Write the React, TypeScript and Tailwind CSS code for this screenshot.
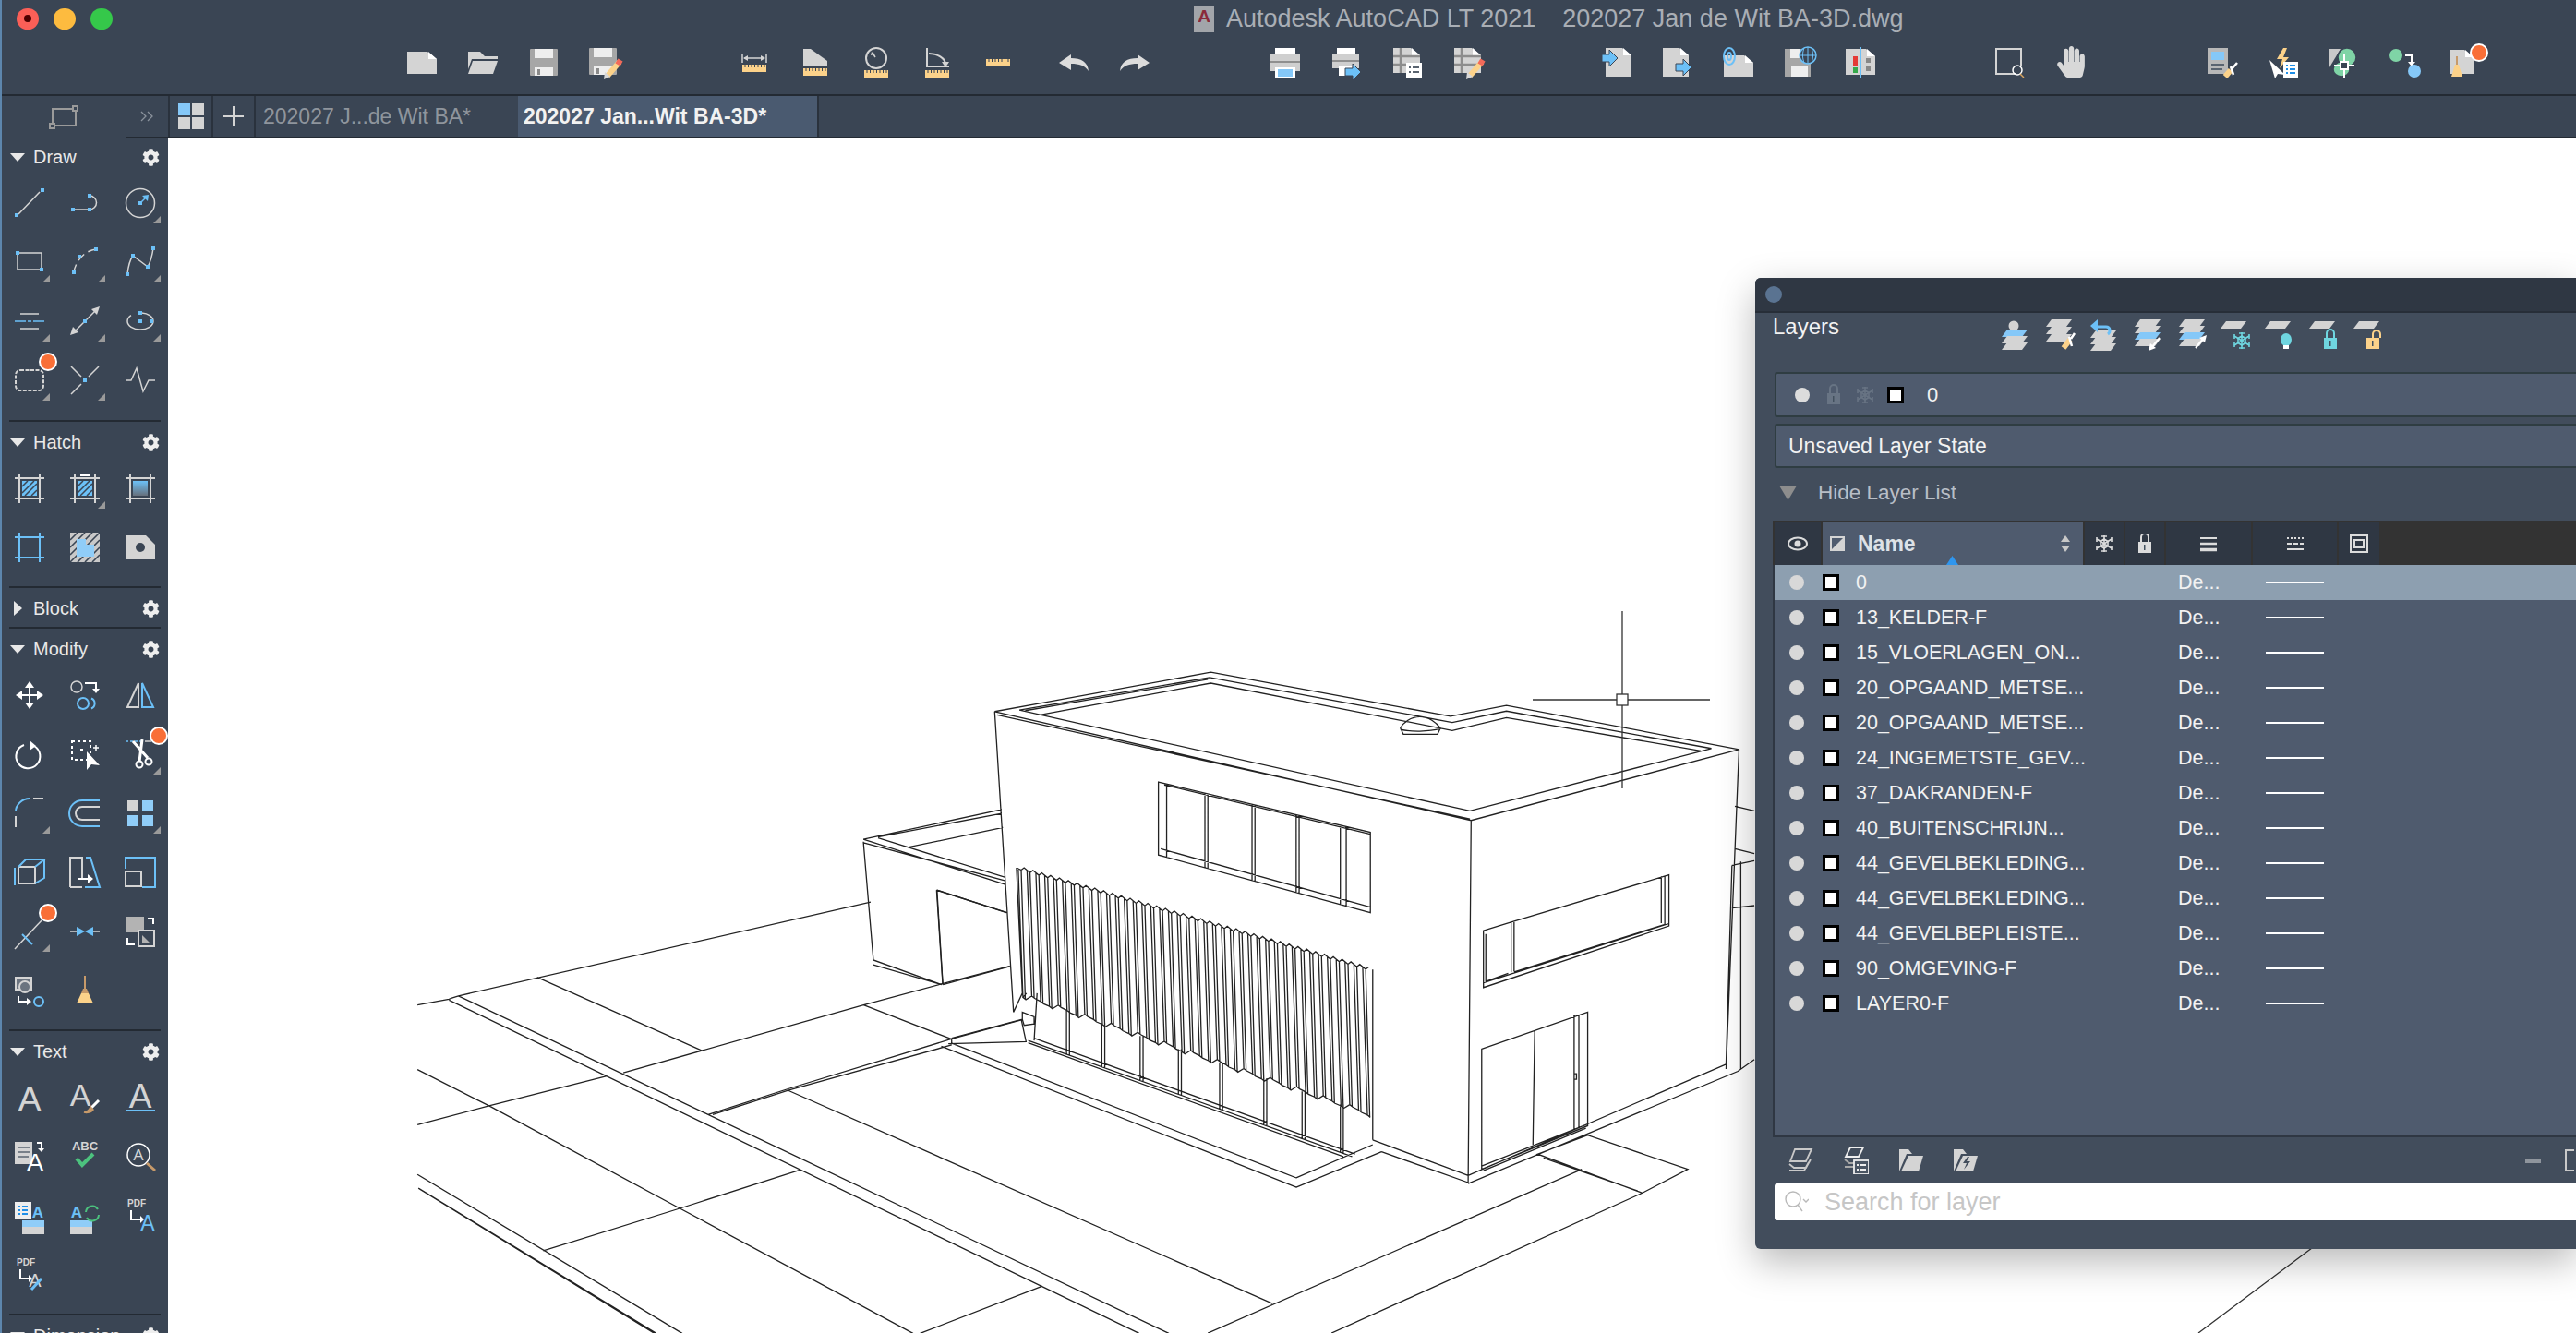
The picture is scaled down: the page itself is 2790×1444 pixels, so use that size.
import React from 'react';
import { FaCog, FaHandPaper } from 'react-icons/fa';

const G = '#d4d4d4';
const B = '#6cc0f7';
const W = '#ffffff';
const A = '#fcd28a';
const O = '#f96f37';
const FONT = '"Liberation Sans", Arial, sans-serif';

const Sq = ({ x, y }: { x: number; y: number }) => <rect x={x - 2} y={y - 2} width={4} height={4} fill={B} stroke="none" />;

const Badge = ({ x = 20, y = -20 }: { x?: number; y?: number }) => (
  <circle cx={x} cy={y} r={9} fill={O} stroke={W} strokeWidth={2} />
);

// sidebar tool icon, coordinates are px from the centre
const T = ({ fly, badge, children }: { fly?: boolean; badge?: boolean; children?: React.ReactNode }) => (
  <div className="flex items-center justify-center">
    <svg viewBox="-24 -24 48 48" className="h-12 w-12 overflow-visible" fill="none" stroke={G} strokeWidth={1.5}>
      {children}
      {fly && <polygon points="22,14 22,22 14,22" fill="#9a9a9a" stroke="none" />}
      {badge && <Badge />}
    </svg>
  </div>
);

const Frame = ({ c = G }: { c?: string }) => (
  <path d="M-11 -16V16M11 -16V16M-16 -11H16M-16 11H16" stroke={c} strokeWidth={2} />
);

const HatchFill = () => (
  <g>
    <rect x={-8} y={-8} width={16} height={16} fill="#6cc0f7" stroke="none" />
    <path d="M-8 -2L-2 -8M-8 5L5 -8M-5 8L8 -5M2 8L8 2" stroke="#3a4554" strokeWidth={1.5} />
  </g>
);

const Letter = ({ x = 0, y = 14, s = 37, c = G, w = 400, children }: { x?: number; y?: number; s?: number; c?: string; w?: number; children: React.ReactNode }) => (
  <text x={x} y={y} fontSize={s} fill={c} stroke="none" fontWeight={w} fontFamily={FONT} textAnchor="middle">{children}</text>
);

const Gear = () => <FaCog className="text-[19px] text-[#eeeeee]" />;

const Section = ({ title, first, open = true, children }: { title: string; first?: boolean; open?: boolean; children?: React.ReactNode }) => (
  <div className={first ? 'mt-[2px]' : 'mt-1'}>
    <div className="flex h-9 items-center pl-[9px] pr-[9px]">
      <svg viewBox="0 0 16 16" className="h-4 w-4">
        {open ? <polygon points="0,4 16,4 8,13" fill="#e8e8e8" /> : <polygon points="4,0 13,8 4,16" fill="#e8e8e8" />}
      </svg>
      <span className="ml-[9px] text-[20px] leading-none text-[#e8e8e8]">{title}</span>
      <span className="ml-auto"><Gear /></span>
    </div>
    {children && <div className="grid grid-cols-[60px_60px_60px] auto-rows-[64px]">{children}</div>}
  </div>
);

const Div = ({ pb = 'mt-[10px]' }: { pb?: string }) => <div className={`${pb} ml-2 mr-2 h-[2px] bg-[#232a33]`} />;

const Sidebar = () => (
  <div className="w-[180px] shrink-0 overflow-hidden bg-[#3a4554]">
    <div className="flex h-[46px] items-start">
      <svg viewBox="0 0 34 26" className="ml-[50px] mt-[10px] h-[26px] w-[34px]" fill="none" stroke="#9a9a9a" strokeWidth={2}>
        <path d="M5 4H30V22H5Z" />
        <rect x={27} y={1} width={5} height={5} fill="#3a4554" />
        <rect x={2} y={20} width={5} height={5} fill="#3a4554" />
      </svg>
      <div className="ml-auto flex h-[46px] w-[46px] items-center border-b-2 border-[#232a33] pl-[16px] text-[#8a929c]">
        <svg viewBox="0 0 14 12" className="h-3 w-[14px]" fill="none" stroke="currentColor" strokeWidth={1.3}><path d="M1 1L6 6L1 11M8 1L13 6L8 11" /></svg>
      </div>
    </div>

    <Section title="Draw" first>
      <T><path d="M-12 12L11 -12" /><Sq x={-14} y={13} /><Sq x={14} y={-14} /></T>
      <T><path d="M-13 7H5A7.5 7.5 0 0 0 5 -8" /><Sq x={-13} y={7} /><Sq x={5} y={7} /><Sq x={5} y={-8} /></T>
      <T fly><circle r={15.5} /><path d="M0 0L7 -7" stroke={B} /><polygon points="9,-9 2,-8 8,-2" fill={B} stroke="none" /><Sq x={0} y={0} /></T>
      <T fly><path d="M-13 -10H13V8H-13Z" /><Sq x={-13} y={-10} /><Sq x={13} y={8} /></T>
      <T fly><path d="M-12 11C-11 2 -3 -12 12 -14" strokeDasharray="9 5" /><Sq x={-12} y={11} /><Sq x={-6} y={-6} /><Sq x={12} y={-14} /></T>
      <T fly><path d="M-14 13C-13 4 -11 -3 -8 -7L8 5C11 0 13 -8 14 -15" /><Sq x={-14} y={13} /><Sq x={-8} y={-7} /><Sq x={8} y={5} /><Sq x={14} y={-15} /></T>
      <T fly><path d="M-10 -8H10M-10 8H10" /><path d="M-16 0H-4M-2 0H2M4 0H16" stroke={B} /></T>
      <T fly><path d="M-13 13L13 -13" /><polygon points="-16,15 -13,6 -7,12" fill={G} stroke="none" /><polygon points="16,-16 7,-13 13,-7" fill={G} stroke="none" /><Sq x={0} y={0} /></T>
      <T fly><ellipse rx={14} ry={9} strokeDasharray="44 12" /><Sq x={0} y={-9} /><Sq x={0} y={0} /><Sq x={12} y={0} /></T>
      <T fly badge><rect x={-15} y={-11} width={30} height={22} rx={5} strokeDasharray="4 1.5" strokeWidth={2} /></T>
      <T fly><path d="M-15 -15L-4 -4M15 -15L4 -4M-15 15L-4 4" /><Sq x={0} y={0} /></T>
      <T><path d="M-16 0H-10L-4 -13L3 12L9 0H16" /></T>
    </Section>
    <Div pb="mt-[11px]" />

    <Section title="Hatch">
      <T><Frame /><HatchFill /></T>
      <T fly><Frame /><HatchFill /><rect x={-5} y={-16} width={10} height={3} fill={W} stroke="none" /></T>
      <T><Frame /><rect x={-8} y={-8} width={16} height={16} fill="url(#gradFill)" stroke="none" /><defs><linearGradient id="gradFill" x1="0" y1="0" x2="0" y2="1"><stop offset="0" stopColor={B} /><stop offset="1" stopColor="#67707c" /></linearGradient></defs></T>
      <T><Frame c={B} /></T>
      <T>
        <rect x={-16} y={-16} width={32} height={32} fill="#c9c9c9" stroke="none" />
        <path d="M-16 -8L-8 -16M-16 0L0 -16M-16 8L8 -16M-16 16L16 -16M-8 16L16 -8M0 16L16 0M8 16L16 8" stroke="#3a4554" strokeWidth={1.6} />
        <polygon points="-9,-9 1,-9 1,-3 10,-3 10,10 -9,10" fill="#90cdf8" stroke="none" />
      </T>
      <T><polygon points="-16,-13 6,-13 16,-3 16,13 -16,13" fill={G} stroke="none" /><circle r={5} fill="#3a4554" stroke="none" /></T>
    </Section>
    <Div />

    <Section title="Block" open={false} />
    <Div pb="mt-[2px]" />

    <Section title="Modify">
      <T>
        <path d="M-11 0H11M0 -11V11" stroke={W} strokeWidth={2} />
        <polygon points="0,-15 -5,-8 5,-8" fill={W} stroke="none" /><polygon points="0,15 -5,8 5,8" fill={W} stroke="none" />
        <polygon points="-15,0 -8,-5 -8,5" fill={W} stroke="none" /><polygon points="15,0 8,-5 8,5" fill={W} stroke="none" />
      </T>
      <T>
        <circle cx={-9} cy={-9} r={6} />
        <path d="M0 -13H12V-6" stroke={W} strokeWidth={2} /><polygon points="12,-2 8,-7 16,-7" fill={W} stroke="none" />
        <circle cx={-2} cy={9} r={6} stroke={B} strokeWidth={2} /><path d="M7 3.5A6 6 0 0 1 7 14.5" stroke={B} strokeWidth={2} />
      </T>
      <T><path d="M-14 13H-2V-13Z" strokeWidth={2} /><path d="M2 -13V13H14Z" stroke={B} strokeWidth={2} /></T>
      <T><path d="M-6 -12A13 13 0 1 0 5 -11" stroke={W} strokeWidth={2} transform="translate(0 2)" /><polygon points="0,-15 7,-9 0,-4" fill={W} stroke="none" /></T>
      <T>
        <rect x={-14} y={-14} width={20} height={20} stroke={W} strokeWidth={2} strokeDasharray="3 3" />
        <rect x={-5} y={-6} width={3} height={3} fill={W} stroke="none" />
        <polygon points="2,-3 16,12 7,11 2,17" fill={W} stroke="none" />
        <path d="M9 -7H15M12 -10V-4" stroke={W} />
      </T>
      <T fly badge>
        <path d="M-16 -14H2" stroke={B} strokeDasharray="3 2" /><path d="M5 -14H12" />
        <path d="M-8 -14L8 4M2 -16L-1 8" stroke={W} strokeWidth={3} />
        <circle cx={-1} cy={11} r={3.5} stroke={W} strokeWidth={2} /><circle cx={9} cy={8} r={3.5} stroke={W} strokeWidth={2} />
      </T>
      <T fly><path d="M-15 -2C-15 -9 -8 -16 0 -16" stroke={B} strokeWidth={2} /><path d="M4 -16H15M-15 3V15" strokeWidth={2} /></T>
      <T><path d="M16 -14H-3A14 14 0 0 0 -3 14H16" stroke={B} strokeWidth={2} /><path d="M16 -7H-3A7 7 0 0 0 -3 7H16" strokeWidth={2} /></T>
      <T fly>
        <rect x={-14} y={-14} width={12} height={12} fill={G} stroke="none" /><rect x={2} y={-14} width={12} height={12} fill="#90cdf8" stroke="none" />
        <rect x={-14} y={2} width={12} height={12} fill="#90cdf8" stroke="none" /><rect x={2} y={2} width={12} height={12} fill="#90cdf8" stroke="none" />
      </T>
      <T><rect x={-12} y={-6} width={18} height={18} strokeWidth={2} /><path d="M-16 14V-5M-12 -6L-4 -14H16L6 -6M16 -14V6L6 12" stroke={B} strokeWidth={2} /></T>
      <T><path d="M-16 16V-16H-3V6M-3 16H-16" strokeWidth={2} /><path d="M1 -16H6L16 16H0" stroke={B} strokeWidth={2} /><path d="M-8 7H4" stroke={W} strokeWidth={2} /><polygon points="9,7 3,2 3,12" fill={W} stroke="none" /></T>
      <T><path d="M-16 -4V-16H16V16H2" stroke={B} strokeWidth={2} /><rect x={-16} y={-1} width={17} height={16} strokeWidth={2} /></T>
      <T fly badge><path d="M-16 19L15 -14" /><path d="M-8 3L3 14" stroke={B} strokeWidth={2} /></T>
      <T><path d="M-16 0H-4M4 0H16" /><polygon points="0,0 -9,-5 -9,5" fill={B} stroke="none" /><polygon points="0,0 9,-5 9,5" fill={B} stroke="none" /></T>
      <T>
        <rect x={-16} y={-16} width={20} height={17} fill="#b3b3b3" stroke="none" />
        <rect x={-2} y={-1} width={17} height={17} fill="#3a4554" strokeWidth={2} />
        <polygon points="2,13 11,13 2,4" fill="#b3b3b3" stroke="none" />
        <path d="M8 -14H14V-8" stroke={W} strokeWidth={2} /><path d="M-14 7V14H-6" stroke={W} strokeWidth={2} />
      </T>
      <T>
        <rect x={-15} y={-14} width={17} height={13} fill="#6b7480" stroke={G} strokeWidth={2} />
        <circle cx={-5} cy={-4} r={6} fill="#6b7480" stroke={G} strokeWidth={2} />
        <path d="M-12 6V12H-2" stroke={W} strokeWidth={2} /><polygon points="2,12 -3,8 -3,16" fill={W} stroke="none" />
        <circle cx={10} cy={12} r={5} stroke={B} strokeWidth={2} />
      </T>
      <T>
        <path d="M0 -16V-2" stroke="#c79a6a" strokeWidth={2} />
        <polygon points="-2,-2 2,-2 4,3 -4,3" fill="#c79a6a" stroke="none" />
        <polygon points="-4,3 4,3 9,14 -9,14" fill={A} stroke="none" />
      </T>
      <div />
    </Section>
    <Div />

    <Section title="Text">
      <T><Letter>A</Letter></T>
      <T><Letter x={-5} y={9} s={34}>A</Letter><path d="M6 12L15 3" stroke={W} strokeWidth={3} /><path d="M-1 16C2 16 5 13 6 10L9 13C7 16 2 17 -1 16Z" fill="#c79a6a" stroke="#c79a6a" /></T>
      <T><Letter y={11}>A</Letter><path d="M-16 14H16" stroke={B} strokeWidth={2} /></T>
      <T>
        <rect x={-16} y={-16} width={19} height={24} fill={G} stroke="none" />
        <path d="M-12 -10H0M-12 -5H0M-12 0H-1" stroke="#5a6470" strokeWidth={1.5} />
        <Letter x={6} y={16} s={28} c={W}>A</Letter>
        <path d="M8 -15H13V-8" stroke={W} strokeWidth={2} /><polygon points="13,-5 9,-9 16,-9" fill={W} stroke="none" />
      </T>
      <T><Letter y={-7} s={13} w={700}>ABC</Letter><path d="M-9 2L-3 9L9 -3" stroke="#4cc27e" strokeWidth={4} /></T>
      <T>
        <circle cx={-2} cy={-2} r={12} stroke={W} />
        <Letter x={-2} y={4} s={17} c={G}>A</Letter>
        <path d="M7 7L16 15" stroke="#c79a6a" strokeWidth={3} />
      </T>
      <T>
        <rect x={-8} y={5} width={24} height={7} fill="#90cdf8" stroke="none" />
        <rect x={-8} y={15} width={24} height={8} fill={G} stroke="none" transform="translate(0 -3)" />
        <rect x={-16} y={-15} width={18} height={18} fill="#eeeeee" stroke="none" />
        <path d="M-12 -10H-10M-8 -10H-2M-12 -6H-10M-8 -6H-2M-12 -2H-10M-8 -2H-2" stroke="#1f8fe8" strokeWidth={1.8} />
        <Letter x={9} y={2} s={17} c={B} w={700}>A</Letter>
      </T>
      <T>
        <rect x={-16} y={5} width={24} height={7} fill="#90cdf8" stroke="none" />
        <rect x={-16} y={12} width={24} height={8} fill={G} stroke="none" />
        <Letter x={-9} y={2} s={17} c={B} w={700}>A</Letter>
        <path d="M1 -4A7 7 0 0 1 14 -7M15 -1A7 7 0 0 1 2 2" stroke="#4cc27e" strokeWidth={2} />
      </T>
      <T>
        <Letter x={-4} y={-10} s={10} w={700}>PDF</Letter>
        <path d="M-10 -6V4H1" stroke={W} strokeWidth={2} /><polygon points="4,4 0,0 0,8" fill={W} stroke="none" />
        <Letter x={8} y={16} s={23} c={B}>A</Letter>
      </T>
      <T>
        <Letter x={-4} y={-10} s={10} w={700}>PDF</Letter>
        <path d="M-10 -6V4H0" stroke={W} strokeWidth={2} /><polygon points="3,4 -1,0 -1,8" fill={W} stroke="none" />
        <Letter x={6} y={13} s={20}>A</Letter>
        <path d="M2 16L13 4" stroke={B} strokeWidth={3} />
      </T>
      <div />
      <div />
    </Section>
    <Div />

    <Section title="Dimension" />
  </div>
);

// toolbar glyphs are wider than tall, px from the centre
const B1 = ({ children, w = 48 }: { children?: React.ReactNode; w?: number }) => (
  <svg viewBox={`${-w / 2} -20 ${w} 40`} className="h-10 shrink-0 overflow-visible" style={{ width: w }} fill="none" stroke={G} strokeWidth={1.5}>
    {children}
  </svg>
);

const Ruler = ({ y, h = 8 }: { y: number; h?: number }) => (
  <g>
    <rect x={-13} y={y} width={26} height={h} fill={A} stroke="none" />
    <path d={`M-10 ${y}v3M-6.5 ${y}v3M-3 ${y}v3M0.5 ${y}v3M4 ${y}v3M7.5 ${y}v3M11 ${y}v3`} stroke="#3a4554" strokeWidth={1} />
  </g>
);

const Doc = ({ x0 = -16, x1 = 16, y0 = -15, y1 = 16, c = G }: { x0?: number; x1?: number; y0?: number; y1?: number; c?: string }) => (
  <g>
    <polygon points={`${x0},${y0} ${x1 - 10},${y0} ${x1},${y0 + 8} ${x1},${y1} ${x0},${y1}`} fill={c} stroke="none" />
    <polygon points={`${x1 - 9},${y0} ${x1},${y0 + 8} ${x1 - 9},${y0 + 8}`} fill={W} stroke="none" />
  </g>
);

const Disk = () => (
  <g>
    <rect x={-15} y={-14} width={30} height={29} rx={1} fill="#a6a6a6" stroke="none" />
    <rect x={-10} y={-14} width={20} height={10} fill="#eeeeee" stroke="none" />
    <rect x={-10} y={6} width={20} height={9} fill="#eeeeee" stroke="none" />
    <rect x={-7} y={8} width={3} height={6} fill="#8a8a8a" stroke="none" />
  </g>
);

const Pencil = ({ x = 0, y = 0 }: { x?: number; y?: number }) => (
  <g transform={`translate(${x} ${y})`}>
    <path d="M0 13L13 -2" stroke={A} strokeWidth={6} />
    <path d="M11 1L14 -4" stroke="#f26a5a" strokeWidth={6} />
    <polygon points="-4,17 -3,9 3,14" fill="#d8d8d8" stroke="none" />
  </g>
);

const Sheet = () => (
  <g>
    <Doc x0={-15} x1={14} y0={-15} y1={12} />
    <path d="M-7 -15V12M-15 -6H14M-15 3H14" stroke="#8d8d8d" strokeWidth={2.5} />
  </g>
);

const BlueArrow = ({ x, y, flip }: { x: number; y: number; flip?: boolean }) => (
  <g transform={`translate(${x} ${y}) scale(${flip ? -1 : 1} 1)`}>
    <polygon points="-8,-4 0,-4 0,-9 9,0 0,9 0,4 -8,4" fill={B} stroke="#3a4554" strokeWidth={1} />
  </g>
);

const Toolbar = () => (
  <div className="mt-[7px] flex h-10 items-center pl-[431px]">
    <div className="flex gap-[18px]">
      <B1><Doc x0={-16} x1={16} y0={-11} y1={13} /></B1>
      <B1>
        <polygon points="-16,-11 -3,-11 2,-6 16,-6 16,-3 -12,-3 -16,8" fill={G} stroke="none" />
        <polygon points="-11,-1 16,-1 11,13 -16,13" fill={G} stroke="none" />
      </B1>
      <B1><Disk /></B1>
      <B1>
        <g transform="translate(-2 -1)"><Disk /></g>
        <Pencil x={3} y={2} />
      </B1>
    </div>
    <div className="ml-[114px] flex gap-[18px]">
      <B1><path d="M-13 -9V1M13 -9V1" /><path d="M-11 -4H11" /><polygon points="-12,-4 -7,-7 -7,-1" fill={G} stroke="none" /><polygon points="12,-4 7,-7 7,-1" fill={G} stroke="none" /><Ruler y={3} /></B1>
      <B1><polygon points="-13,-14 -5,-14 13,-1 13,5 -13,5" fill={G} stroke="none" /><Ruler y={7} /></B1>
      <B1><circle cy={-4} r={11} strokeWidth={2} /><path d="M-1 -5L-4 -10" /><polygon points="-5,-11 -6,-7 -2,-8" fill={G} stroke="none" /><Ruler y={9} /></B1>
      <B1><path d="M-11 -15V5H13" strokeWidth={2} /><path d="M-9 -9C0 -9 9 -4 9 3" strokeWidth={2} /><polygon points="9,6 5,0 13,0" fill={G} stroke="none" /><Ruler y={9} /></B1>
      <B1><Ruler y={-3} /></B1>
    </div>
    <div className="ml-[34px] flex gap-[18px]">
      <B1><path d="M-16 1L-3 -8V-4C8 -4 15 0 16 10C12 4 6 2 -3 2V9Z" fill="#dcdcdc" stroke="none" /></B1>
      <B1><path d="M16 1L3 -8V-4C-8 -4 -15 0 -16 10C-12 4 -6 2 3 2V9Z" fill="#dcdcdc" stroke="none" /></B1>
    </div>
    <div className="ml-[115px] flex gap-[18px]">
      <B1>
        <rect x={-11} y={-15} width={22} height={11} fill={W} stroke="none" />
        <rect x={-16} y={-8} width={32} height={18} fill="#cfcfcf" stroke="none" />
        <rect x={-16} y={-1} width={32} height={2} fill="#8f8f8f" stroke="none" />
        <rect x={-11} y={6} width={22} height={12} fill={W} stroke="none" />
        <rect x={-8} y={8} width={16} height={8} fill="#85c8f8" stroke="none" />
      </B1>
      <B1>
        <rect x={-10} y={-15} width={20} height={9} fill={W} stroke="none" />
        <rect x={-15} y={-8} width={29} height={15} fill="#cfcfcf" stroke="none" />
        <rect x={-15} y={-2} width={29} height={2} fill="#8f8f8f" stroke="none" />
        <rect x={-8} y={4} width={14} height={11} fill={W} stroke="none" />
        <BlueArrow x={7} y={11} />
      </B1>
      <B1><Sheet /><rect x={-1} y={1} width={17} height={16} fill={W} stroke="none" /><path d="M2 6H4M6 6H13M2 11H4M6 11H13" stroke="#5a6470" strokeWidth={2} /></B1>
      <B1><Sheet /><Pencil x={2} y={2} /></B1>
    </div>
    <div className="ml-[113px] flex gap-[18px]">
      <B1><Doc y0={-15} y1={16} x0={-12} x1={16} /><BlueArrow x={-8} y={-4} /></B1>
      <B1><Doc y0={-15} y1={16} x0={-16} x1={12} /><BlueArrow x={6} y={6} /></B1>
      <B1>
        <Doc x0={-16} x1={16} y0={-7} y1={16} />
        <ellipse cx={-10} cy={-6} rx={6} ry={9} stroke={B} strokeWidth={2} />
        <ellipse cx={-10} cy={-6} rx={2} ry={4} stroke={B} strokeWidth={2} />
      </B1>
      <B1>
        <rect x={-16} y={-14} width={28} height={30} fill="#a6a6a6" stroke="none" />
        <rect x={-10} y={-14} width={10} height={10} fill="#eeeeee" stroke="none" />
        <rect x={-9} y={5} width={18} height={11} fill="#eeeeee" stroke="none" />
        <circle cx={9} cy={-7} r={9} fill="#3a4554" stroke={B} strokeWidth={1.5} />
        <path d="M0 -7H18M9 -16V2M5 -15C3 -10 3 -4 5 1M13 -15C15 -10 15 -4 13 1" stroke={B} strokeWidth={1} />
      </B1>
      <B1>
        <Doc x0={-16} x1={16} y0={-14} y1={14} />
        <path d="M0 -16V17" stroke={B} strokeWidth={2} />
        <rect x={-8} y={-6} width={5} height={10} fill="#e53935" stroke="none" /><rect x={-8} y={6} width={5} height={6} fill="#35a84a" stroke="none" />
        <rect x={6} y={-4} width={5} height={5} fill="#888" stroke="none" /><rect x={6} y={5} width={5} height={5} fill="#888" stroke="none" />
      </B1>
    </div>
    <div className="ml-[114px] flex gap-[18px]">
      <B1><path d="M7 13H-15V-14H12V5" strokeWidth={2} /><circle cx={8} cy={9} r={5} stroke={W} /><path d="M11 13L15 17" stroke="#d9a560" /></B1>
      <B1><FaHandPaper x={-17} y={-17} size={34} color="#d8d8d8" stroke="none" /></B1>
    </div>
    <div className="ml-[116px] flex gap-[18px]">
      <B1>
        <rect x={-16} y={-15} width={22} height={28} fill="#b8b8b8" stroke="none" />
        <rect x={-12} y={-11} width={14} height={9} fill="#85c8f8" stroke="none" />
        <path d="M-12 3H2M-12 8H0" stroke="#5a6470" strokeWidth={2} />
        <path d="M3 16L9 9" stroke={A} strokeWidth={6} /><path d="M10 8L16 1M12 14L9 5" stroke={W} strokeWidth={2.5} />
      </B1>
      <B1>
        <polygon points="-15,-2 2,14 -6,13 -9,18" fill={W} stroke="none" />
        <polygon points="0,-15 -7,-3 -1,-3 -4,7 6,-5 0,-5 4,-15" fill={A} stroke="none" />
        <rect x={0} y={0} width={16} height={17} fill={W} stroke="none" />
        <path d="M3 4H5M7 4H13M3 8H5M7 8H13M3 12H5M7 12H13" stroke="#1f8fe8" strokeWidth={2} />
      </B1>
      <B1>
        <polygon points="-16,-14 -4,-14 -16,6" fill="#c9c9c9" stroke="none" />
        <ellipse cx={3} cy={-5} rx={10} ry={10} fill="#7fd4a6" stroke="#3a4554" />
        <ellipse cx={-3} cy={8} rx={9} ry={8} fill="#7fd4a6" stroke="#3a4554" />
        <path d="M0 -9V17M-11 4H11" stroke={W} strokeWidth={2} />
        <rect x={-4} y={0} width={8} height={8} fill="#3a4554" stroke={W} strokeWidth={2} />
      </B1>
      <B1>
        <ellipse cx={-10} cy={-7} rx={7} ry={7} fill="#7fd4a6" stroke="none" />
        <path d="M0 -7H7V0" stroke={W} strokeWidth={2} /><polygon points="7,5 3,0 11,0" fill={W} stroke="none" />
        <ellipse cx={10} cy={10} rx={7} ry={7} fill="#85c8f8" stroke="none" />
      </B1>
      <B1>
        <Doc x0={-18} x1={8} y0={-13} y1={13} />
        <path d="M-10 -6V3" stroke="#c79a6a" strokeWidth={2} />
        <polygon points="-12,3 -8,3 -4,16 -16,16" fill={A} stroke="none" />
        <circle cx={14} cy={-10} r={9} fill={O} stroke={W} strokeWidth={2} />
      </B1>
    </div>
  </div>
);

const Header = () => (
  <div className="h-[104px] shrink-0 border-b-2 border-[#232a33] bg-[#3a4554]">
    <div className="flex h-10 items-center">
      <div className="ml-4 flex gap-[16px]">
        <div className="flex h-[23px] w-6 items-center justify-center rounded-full bg-[#fb5f57]"><div className="h-[8px] w-[8px] rounded-full bg-[#4d0000]" /></div>
        <div className="h-[23px] w-6 rounded-full bg-[#fdbb3f]" />
        <div className="h-[23px] w-6 rounded-full bg-[#35c84a]" />
      </div>
      <div className="relative ml-[1171px] h-[29px] w-[22px] bg-[#a2a5aa] text-center text-[19px] font-bold leading-[24px] text-[#8a2a3a]">A</div>
      <span className="ml-[13px] whitespace-nowrap text-[27px] leading-none text-[#a9aeb5]">Autodesk AutoCAD LT 2021</span>
      <span className="ml-[29px] whitespace-nowrap text-[27px] leading-none text-[#a9aeb5]">202027 Jan de Wit BA-3D.dwg</span>
    </div>
    <Toolbar />
  </div>
);

const Tabs = () => (
  <div className="flex h-[46px] shrink-0 border-b-2 border-[#232a33] bg-[#3a4554]">
    <div className="flex h-[44px] w-[49px] items-center justify-center border-l-2 border-r-2 border-[#2a323d]">
      <div className="grid grid-cols-[13px_13px] gap-[2px]">
        <div className="h-[13px] bg-[#85c8f8]" /><div className="h-[13px] bg-[#d4d4d4]" />
        <div className="h-[13px] bg-[#d4d4d4]" /><div className="h-[13px] bg-[#d4d4d4]" />
      </div>
    </div>
    <div className="flex h-[44px] w-[46px] items-center justify-center border-r-2 border-[#2a323d]">
      <svg viewBox="0 0 24 24" className="h-6 w-6" stroke="#d4d4d4" strokeWidth={2}><path d="M12 1V23M1 12H23" /></svg>
    </div>
    <div className="flex h-[44px] w-[284px] items-center pl-2 text-[23px] text-[#8f959d]">202027 J...de Wit BA*</div>
    <div className="flex h-[44px] w-[326px] items-center border-r-2 border-[#2a323d] bg-[#4a5a70] pl-[6px] text-[23px] font-bold text-[#f2f2f2]">202027 Jan...Wit BA-3D*</div>
  </div>
);

// building lines are noted in two sets of crop coordinates
const ground = [
  'M63 543L130 525L136 522L150 515L1025 222',
  'M150 515L1658 1568', 'M130 528L1595 1568',
  'M317 457L667 686',
  'M500 755L1010 543L1175 478L1320 422',
  'M465 765L215 858L63 917', 'M215 858L63 745',
  'M215 858L620 1178L1115 1568', 'M620 1178L875 1058', 'M620 1178L330 1310',
  'M63 1072L625 1568', 'M65 1115L570 1568', 'M68 1118L566 1568',
  'M1390 1420L1130 1568',
  'M680 885L850 805L1195 650L1345 590', 'M690 885L850 810L1197 668',
  'M850 810L1878 1475',
  'M1010 543L1197 650',
  'M1175 672L1929 1112', 'M1197 663L1929 1083',
  'M1197 650V665', 'M1190 664L1355 658L1345 590',
  'M1165 185L1178 478', 'M1165 185L1315 255',
].join(' ');

const slatTop = (x: number) => 585 + (x - 315) * 0.358;
const slatBot = (x: number) => 862 + (x - 340) * 0.425;
const slats: string[] = [];
let topEdge = 'M315 585';
let botEdge = 'M332 850';
for (let i = 0; i < 40; i++) {
  const x = 318 + i * 15;
  const t = slatTop(x);
  const b = slatBot(x) + (i % 3 === 0 ? 6 : i % 3 === 1 ? -3 : 2);
  slats.push(`M${x} ${t}L${x + 8} ${b}`, `M${x + 5} ${t + 3}L${x + 12} ${b + 4}`);
  topEdge += `L${x + 5} ${t + 4}L${x + 10} ${t - 1}`;
  botEdge += `L${x + 8} ${b}L${x + 13} ${b + 5}`;
}
const mullions: string[] = [];
[400, 460, 525, 590, 660, 735, 800, 865].forEach((x) => {
  const b = 950 + (x - 335) * 0.445;
  mullions.push(`M${x} ${slatBot(x)}L${x} ${b}`, `M${x + 5} ${slatBot(x)}L${x + 5} ${b + 2}`);
});
const upperWin: string[] = [];
[570, 635, 640, 715, 720, 790, 795, 865, 875].forEach((x) => {
  upperWin.push(`M${x} ${404 + (x - 556) * 0.294}L${x} ${558 + (x - 556) * 0.339}`);
});

const building = [
  'M278 255L645 172L1052 265L1147 242L1542 335L1087 485L278 255',
  'M282 262L1085 482', 'M320 252L643 183L1055 278L1147 254L1495 333L1085 465L320 252',
  'M355 262L645 195L1055 295L1147 268L1477 338',
  'M330 253L640 187',
  'M278 255L310 890', 'M1087 485L1082 1252', 'M1542 335L1520 1010',
  'M1082 1235L1520 1000', 'M1082 1252L1540 1015L1568 990',
  'M920 1160L1082 1235', 'M935 1185L1082 1250', 'M920 1160V800',
  'M967 290C972 278 985 266 1000 266C1015 266 1028 278 1035 290L1030 303L972 303Z', 'M967 293C985 298 1015 298 1035 291',
  'M556 404L916 510V680L556 558Z', 'M566 410L916 514', 'M560 545L916 668', ...upperWin,
  'M315 585L325 850L310 890',
  'M335 950L885 1195', 'M345 945L890 1190', 'M335 955L870 1195', 'M350 850L345 950', ...mullions,
  'M325 905V890L345 900V915L328 918Z',
  topEdge, botEdge, ...slats,
  'M1108 718L1155 700L1423 600V708L1108 838Z', 'M1108 718V838', 'M1155 700V806', 'M1160 700V804',
  'M1112 725V825L1150 808', 'M1108 828L1423 703', 'M1160 805L1415 705', 'M1410 603V702', 'M1416 602V706',
  'M1105 968L1285 890V1130L1105 1222Z', 'M1195 930L1192 1170', 'M1262 897V1140', 'M1270 895V1135',
  'M1105 1215L1282 1128', 'M1108 1225L1282 1135', 'M1262 1020H1266V1032H1262Z',
  'M55 525L290 462', 'M80 520L290 470', 'M130 542L292 500', 'M55 525L295 620', 'M55 532L295 612', 'M80 522L295 605',
  'M55 530L72 780L188 832', 'M72 790L188 832', 'M180 632L190 832', 'M180 632L298 680',
  'M190 832L305 793', 'M205 945L325 905', 'M790 1260L935 1185', 'M790 1240L920 1170',
  'M640 1568L1275 1222', 'M850 1568L1378 1272L1455 1222L1285 1150L1200 1190L1378 1272', 'M1210 1198L1370 1268',
  'M1535 455L1568 465', 'M1535 545L1568 555', 'M1530 580L1520 1000', 'M1545 572V1010', 'M1530 580L1568 570', 'M1530 670L1568 665',
].join(' ');

const Drawing = () => (
  <svg viewBox="182 150 2608 1294" className="block h-full w-full" fill="none" stroke="#222222" strokeWidth={1.3}>
    <g transform="translate(420 900) scale(0.5102 0.3472)">
      <path d={ground} vectorEffect="non-scaling-stroke" />
    </g>
    <g transform="translate(900 640) scale(0.6378 0.5128)">
      <path d={building} vectorEffect="non-scaling-stroke" />
    </g>
    {/* crosshair */}
    <path d="M1757 662V752M1757 764V854M1660 758H1751M1763 758H1852" stroke="#333333" />
    <rect x={1751} y={752} width={12} height={12} stroke="#333333" fill="#ffffff" />
    <path d="M2381 1444L2520 1340" stroke="#333333" />
  </svg>
);

// 3 flat sheets stacked, the layer icon base
const Para = ({ y, c = G, x = 0 }: { y: number; c?: string; x?: number }) => (
  <polygon points={`${x - 14},${y + 4} ${x - 8},${y - 4} ${x + 14},${y - 4} ${x + 8},${y + 4}`} fill={c} stroke="none" />
);

const Lock = ({ x, y, c, open }: { x: number; y: number; c: string; open?: boolean }) => (
  <g transform={`translate(${x} ${y})`}>
    <path d={open ? 'M0 0V-4A4 4 0 0 1 8 -4V0' : 'M-4 0V-5A4 4 0 0 1 4 -5V0'} stroke={c} strokeWidth={2} fill="none" />
    <rect x={-7} y={0} width={14} height={12} fill={c} stroke="none" />
    <rect x={-1} y={3} width={1.5} height={6} fill="#42505e" stroke="none" />
  </g>
);

const Snow = ({ x = 0, y = 0, c }: { x?: number; y?: number; c: string }) => (
  <g transform={`translate(${x} ${y})`} stroke={c} strokeWidth={1.6} fill="none">
    <path d="M0 -9V9M-8 -5L8 5M-8 5L8 -5" />
    <path d="M0 -5L4 -2.5V2.5L0 5L-4 2.5V-2.5Z" />
    <path d="M-3 -8L3 -8M-3 8L3 8M-8 -2V-7M8 2V7M-8 2V7M8 -2V-7" />
  </g>
);

const L1 = ({ children }: { children: React.ReactNode }) => (
  <svg viewBox="-20 -18 40 36" className="h-9 w-10 shrink-0 overflow-visible">{children}</svg>
);

const PaletteIcons = () => (
  <div className="mt-[5px] flex gap-2">
    <L1><circle cx={-1} cy={-9} r={5.5} fill={G} /><Para y={-1} c="#85c8f8" /><Para y={6} /><Para y={13} /></L1>
    <L1><Para y={-12} /><Para y={-4} /><Para y={4} /><path d="M5 15L12 6" stroke={A} strokeWidth={6} /><path d="M13 5L17 -1M14 13L11 3" stroke={W} strokeWidth={2.5} /></L1>
    <L1><Para y={0} /><Para y={7} /><Para y={14} /><path d="M-6 -8H3C8 -8 8 -2 5 0" stroke={B} strokeWidth={3} fill="none" /><polygon points="-14,-9 -6,-16 -6,-2" fill={B} /></L1>
    <L1><Para y={-12} /><Para y={-5} /><Para y={2} c="#85c8f8" /><Para y={9} /><path d="M13 4L4 15" stroke={W} strokeWidth={2} /><polygon points="1,18 3,10 9,15" fill={W} /></L1>
    <L1><Para y={-12} /><Para y={-5} /><Para y={2} c="#85c8f8" /><Para y={9} /><path d="M4 15L13 4" stroke={W} strokeWidth={2} /><polygon points="16,1 14,9 8,4" fill={W} /></L1>
    <L1><Para y={-10} x={-3} /><Snow x={6} y={7} c="#6fd6e0" /></L1>
    <L1><Para y={-10} x={-3} /><ellipse cx={6} cy={6} rx={6} ry={7} fill="#6fd6e0" /><rect x={3} y={12} width={6} height={4} fill={W} /></L1>
    <L1><Para y={-10} x={-3} /><Lock x={6} y={4} c="#6fd6e0" /></L1>
    <L1><Para y={-10} x={-3} /><Lock x={4} y={4} c={A} open /></L1>
  </div>
);

const layers = ['0', '13_KELDER-F', '15_VLOERLAGEN_ON...', '20_OPGAAND_METSE...', '20_OPGAAND_METSE...', '24_INGEMETSTE_GEV...', '37_DAKRANDEN-F', '40_BUITENSCHRIJN...', '44_GEVELBEKLEDING...', '44_GEVELBEKLEDING...', '44_GEVELBEPLEISTE...', '90_OMGEVING-F', 'LAYER0-F'];

const ColorBox = () => <div className="h-[18px] w-[18px] shrink-0 border-[3px] border-black bg-white" />;

const HeadCell = ({ w, children }: { w: string; children?: React.ReactNode }) => (
  <div className={`${w} ml-[2px] flex h-full shrink-0 items-center justify-center bg-[#2f3743]`}>{children}</div>
);

const HIco = ({ children }: { children: React.ReactNode }) => (
  <svg viewBox="-12 -12 24 24" className="h-6 w-6" fill="none" stroke="#dcdcdc" strokeWidth={1.8}>{children}</svg>
);

const LayersPalette = () => (
  <div className="absolute right-0 top-[151px] flex h-[1052px] w-[889px] flex-col overflow-hidden rounded-l-[6px] bg-[#424d5c] shadow-[0_14px_40px_rgba(0,0,0,0.28)]">
    <div className="flex h-[38px] shrink-0 items-center border-b-2 border-[#272e38] bg-[#2f3743] pl-[11px]">
      <div className="h-[18px] w-[18px] rounded-full bg-[#5a7391]" />
    </div>
    <div className="flex h-[46px] shrink-0 pl-[19px]">
      <div className="w-[242px] pt-[2px] text-[24px] leading-[26px] text-[#f2f2f2]">Layers</div>
      <PaletteIcons />
    </div>
    <div className="ml-[21px] mt-[18px] flex h-[49px] shrink-0 items-center rounded-l-[3px] border-2 border-r-0 border-[#2f3d42] bg-[#4f5b6e]">
      <div className="ml-[20px] h-4 w-4 rounded-full bg-[#dcdcdc]" />
      <svg viewBox="-8 -11 16 24" className="ml-[18px] h-6 w-4"><Lock x={0} y={-1} c="#687484" /></svg>
      <svg viewBox="-10 -10 20 20" className="ml-[16px] h-5 w-5"><Snow c="#687484" /></svg>
      <div className="ml-[14px]"><ColorBox /></div>
      <span className="ml-[25px] text-[22px] text-[#f2f2f2]">0</span>
    </div>
    <div className="ml-[21px] mt-[7px] flex h-[48px] shrink-0 items-center rounded-l-[3px] border-2 border-r-0 border-[#2f3d42] bg-[#4f5b6e] pl-[13px] text-[23px] text-[#f2f2f2]">
      Unsaved Layer State
    </div>
    <div className="flex h-[54px] shrink-0 items-center pl-[26px]">
      <svg viewBox="0 0 19 16" className="h-4 w-[19px]"><polygon points="0,0 19,0 9.5,16" fill="#8d8d8d" /></svg>
      <span className="ml-[23px] text-[22.5px] text-[#b8bec6]">Hide Layer List</span>
    </div>
    <div className="ml-[19px] mt-[3px] flex min-h-0 flex-1 flex-col pb-[31px]">
      <div className="flex h-[48px] shrink-0 bg-[#333333] pt-[2px]">
        <HeadCell w="w-[50px]">
          <svg viewBox="-12 -8 24 16" className="h-4 w-6"><ellipse rx={10} ry={6.5} fill="none" stroke="#dcdcdc" strokeWidth={2} /><circle r={3.5} fill="#dcdcdc" /></svg>
        </HeadCell>
        <div className="relative ml-[2px] flex h-full w-[282px] shrink-0 items-center bg-[#4f5b6e] pl-2 text-[23px] font-bold text-[#dde1e6]">
          <svg viewBox="0 0 16 16" className="h-4 w-4"><rect x={1} y={1} width={14} height={14} fill="none" stroke="#d4d4d4" strokeWidth={2} /><polygon points="16,0 16,16 0,16" fill="#d4d4d4" /></svg>
          <span className="ml-[14px]">Name</span>
          <svg viewBox="0 0 10 18" className="absolute right-[14px] top-[14px] h-[18px] w-[10px]"><polygon points="5,0 10,7 0,7" fill="#c8c8c8" /><polygon points="5,18 10,11 0,11" fill="#c8c8c8" /></svg>
          <svg viewBox="0 0 13 10" className="absolute bottom-0 left-[134px] h-[10px] w-[13px]"><polygon points="6.5,0 13,10 0,10" fill="#2f96ee" /></svg>
        </div>
        <HeadCell w="w-[42px]"><HIco><Snow c="#dcdcdc" /></HIco></HeadCell>
        <HeadCell w="w-[42px]"><svg viewBox="-8 -10 16 22" className="h-[22px] w-4"><Lock x={0} y={-1} c="#dcdcdc" /></svg></HeadCell>
        <HeadCell w="w-[92px]"><HIco><path d="M-9 -6H9" strokeWidth={2} /><path d="M-9 0H9" strokeWidth={2.5} /><path d="M-9 6.5H9" strokeWidth={3.5} /></HIco></HeadCell>
        <HeadCell w="w-[91px]"><HIco><path d="M-9 -6H9" strokeWidth={2} strokeDasharray="2 2" /><path d="M-9 0H9" strokeWidth={2} strokeDasharray="5 2" /><path d="M-9 6H9" strokeWidth={2} /></HIco></HeadCell>
        <HeadCell w="w-[44px]"><HIco><rect x={-9} y={-9} width={18} height={18} strokeWidth={2} /><rect x={-5} y={-4} width={10} height={8} strokeWidth={2} /></HIco></HeadCell>
      </div>
      <div className="min-h-0 flex-1 border-b-2 border-l-2 border-[#2f3743] bg-[#4f5b6e]">
        {layers.map((name, i) => (
          <div key={i} className={`flex h-[38px] items-center text-[21.5px] text-[#f2f2f2] ${i === 0 ? 'bg-[#8d9fb0]' : ''}`}>
            <div className="ml-[16px] h-4 w-4 shrink-0 rounded-full bg-[#d8d8d8]" />
            <div className="ml-5"><ColorBox /></div>
            <span className="ml-[18px] w-[349px] shrink-0 whitespace-nowrap">{name}</span>
            <span className="w-[95px] shrink-0">De...</span>
            <div className="h-[2px] w-[63px] bg-white" />
          </div>
        ))}
      </div>
      <div className="flex h-[50px] shrink-0 items-center">
        <svg viewBox="-14 -15 28 30" className="ml-[16px] h-[30px] w-7" fill="none" stroke="#c9c9c9" strokeWidth={1.8}>
          <path d="M-6 -12H12L6 1H-11Z" /><path d="M-12 4L-7 8H6L11 -1M-12 11H4L9 2" />
        </svg>
        <svg viewBox="-14 -15 28 30" className="ml-8 h-[30px] w-7" fill="none" stroke="#eeeeee" strokeWidth={1.8}>
          <path d="M-6 -14H8L3 -4H-11Z" /><path d="M-12 -1L-7 3H2M-12 7H-2" stroke="#a8a8a8" />
          <rect x={-2} y={0} width={16} height={15} fill="#4a5563" />
          <path d="M1 5H3M5 5H11M1 10H3M5 10H11" />
        </svg>
        <svg viewBox="-14 -12 28 24" className="ml-8 h-6 w-7" fill="#d4d4d4">
          <polygon points="-13,-12 -3,-12 1,-7 -5,-7 -13,12" /><polygon points="-3,-5 13,-5 8,12 -11,12" />
        </svg>
        <svg viewBox="-14 -12 28 24" className="ml-[31px] h-6 w-7" fill="#d4d4d4">
          <polygon points="-13,-12 -3,-12 1,-7 -5,-7 -13,12" /><polygon points="-3,-5 13,-5 8,12 -11,12" />
          <polygon points="2,-4 -3,3 1,3 -2,10 5,1 1,1 4,-4" fill="#424d5c" />
        </svg>
        <div className="ml-[592px] h-[5px] w-[17px] bg-[#8f959d]" />
        <div className="ml-[26px] h-[24px] w-[10px] shrink-0 border-2 border-r-0 border-[#c9c9c9]" />
      </div>
      <div className="ml-[2px] flex h-10 shrink-0 items-center rounded-l-[3px] bg-white pl-[11px] text-[27px] text-[#c6c6c6]">
        <svg viewBox="0 0 26 24" className="h-6 w-[26px] shrink-0" fill="none" stroke="#b9b9b9" strokeWidth={1.4}>
          <circle cx={9} cy={9} r={8} /><path d="M14 15L19 22M20 9L23 12L26 9" />
        </svg>
        <span className="ml-[17px]">Search for layer</span>
      </div>
    </div>
  </div>
);

export default function App() {
  return (
    <div className="flex h-[1444px] w-[2790px] flex-col overflow-hidden border-l-2 border-[#5d86ad] bg-white" style={{ fontFamily: FONT }}>
      <Header />
      <div className="flex min-h-0 flex-1">
        <Sidebar />
        <div className="flex min-w-0 flex-1 flex-col">
          <Tabs />
          <div className="relative min-h-0 flex-1 bg-white">
            <Drawing />
            <LayersPalette />
          </div>
        </div>
      </div>
    </div>
  );
}
